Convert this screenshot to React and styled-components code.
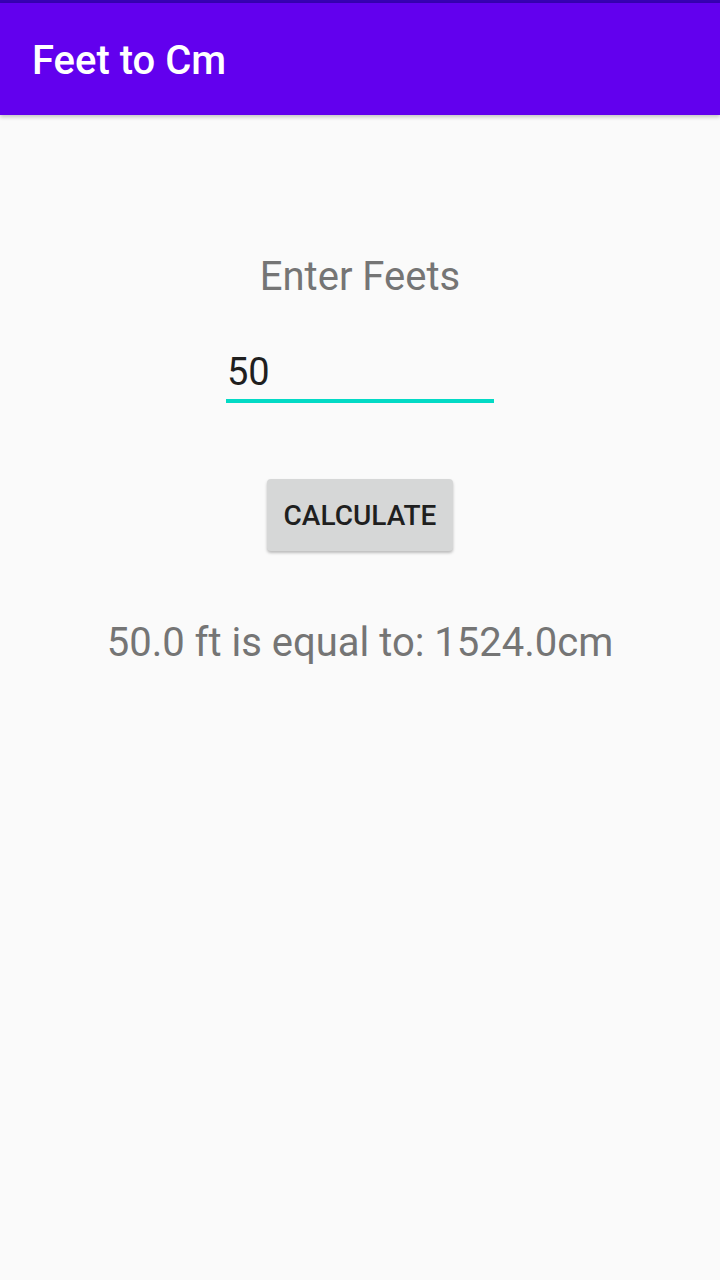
import React from "react";
import styled, { createGlobalStyle } from "styled-components";

const Global = createGlobalStyle`
  html, body { margin: 0; padding: 0; background: #fafafa; }
  body { font-family: Roboto, "Noto Sans", sans-serif; }
  #root { min-height: 1280px; }
`;

const Screen = styled.div`
  width: 720px;
  min-height: 1280px;
  background: #fafafa;
  display: flex;
  flex-direction: column;
`;

const StatusStrip = styled.div`
  height: 3px;
  background: #3700b3;
`;

const AppBar = styled.header`
  height: 112px;
  box-sizing: border-box;
  padding: 4px 0 0 32px;
  background: #6200ee;
  display: flex;
  align-items: center;
  box-shadow: 0 2px 4px rgba(0, 0, 0, 0.22);
  position: relative;
  z-index: 1;
`;

const Title = styled.h1`
  margin: 0;
  color: #ffffff;
  font-size: 40px;
  font-weight: 500;
  line-height: 48px;
`;

const Content = styled.main`
  display: flex;
  flex-direction: column;
  align-items: center;
  padding-top: 138px;
`;

const Label = styled.div`
  font-size: 40px;
  line-height: 48px;
  color: #757575;
`;

const Field = styled.input`
  margin-top: 45px;
  width: 268px;
  box-sizing: border-box;
  border: none;
  border-bottom: 4px solid #03dac5;
  background: transparent;
  font-family: Roboto, sans-serif;
  font-size: 38px;
  line-height: 46px;
  height: 57px;
  padding: 3px 0 4px 1px;
  color: #1f1f1f;
  outline: none;
`;

const Button = styled.button`
  margin-top: 76px;
  width: 186px;
  height: 72px;
  border: none;
  border-radius: 4px;
  background: #d6d7d7;
  box-shadow: 0 2px 3px rgba(0, 0, 0, 0.25);
  font-family: Roboto, sans-serif;
  font-size: 28px;
  font-weight: 500;
  letter-spacing: 0;
  color: #1f1f1f;
  text-transform: uppercase;
  padding: 0;
`;

const Result = styled.div`
  margin-top: 68px;
  font-size: 40px;
  line-height: 48px;
  color: #757575;
`;

export default function App() {
  return (
    <Screen>
      <Global />
      <StatusStrip />
      <AppBar>
        <Title>Feet to Cm</Title>
      </AppBar>
      <Content>
        <Label>Enter Feets</Label>
        <Field defaultValue="50" />
        <Button>Calculate</Button>
        <Result>50.0 ft is equal to: 1524.0cm</Result>
      </Content>
    </Screen>
  );
}
